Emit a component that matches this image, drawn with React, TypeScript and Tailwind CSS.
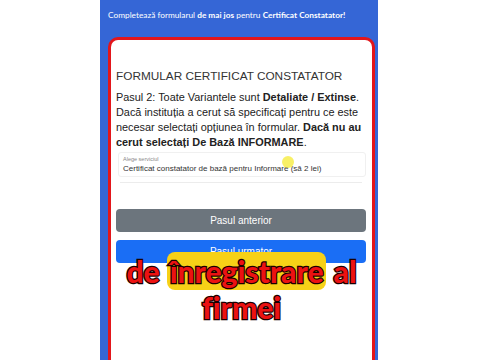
import React from 'react';

const App: React.FC = () => {
  return (
    <div className="w-[480px] h-[360px] overflow-hidden bg-white pl-[100px]">
      {/* phone screen */}
      <div className="w-[278px] h-full bg-[#3566d6] flex flex-col">
        <div className="h-[37px] pl-[8px] pt-[10px] text-white text-[8.3px] leading-[10px] font-['Lato',sans-serif] whitespace-nowrap">
          Completează formularul&nbsp;<b>de mai jos</b>&nbsp;pentru&nbsp;<b>Certificat Constatator!</b>
        </div>

        <div className="relative flex-1 ml-[8px] mr-[3px] border-[3px] border-b-0 border-[#e3161b] rounded-t-[10px] bg-white pl-[5px] pr-[6px] pt-[28px] font-['Liberation_Sans',Arial,sans-serif] text-[#333]">
          <h1 className="text-[11.8px] leading-[16px] text-[#333]">FORMULAR CERTIFICAT CONSTATATOR</h1>
          <p className="mt-[6px] text-[10.9px] leading-[15px] text-[#222]">
            Pasul 2: Toate Variantele sunt <b>Detaliate / Extinse</b>. Dacă instituția a cerut să specificați pentru ce este necesar selectați opțiunea în formular. <b>Dacă nu au cerut selectați De Bază INFORMARE</b>.
          </p>

          {/* select */}
          <div className="relative mt-[2px] ml-[2px] h-[25px] border border-[#f0f0f0] rounded-[3px] px-[4px] flex flex-col justify-center">
            <div className="text-[5.5px] leading-[7px] text-[#888]">Alege serviciul</div>
            <div className="text-[8px] leading-[11px] text-[#333] whitespace-nowrap">
              Certificat constatator de bază pentru Informare (să 2 lei)
            </div>
            <div className="absolute left-[163px] top-[3px] w-[12px] h-[12px] rounded-full bg-[#f3e600]/60" />
          </div>
          <div className="mt-[5px] mx-[4px] h-px bg-[#ececec]" />

          <div className="mt-[26px] h-[23px] rounded-[4px] bg-[#6c757d] flex items-center justify-center text-white text-[10px]">
            Pasul anterior
          </div>
          <div className="mt-[8px] h-[23px] rounded-[4px] bg-[#1a6ef5] flex items-center justify-center text-white text-[10px]">
            Pasul urmator
          </div>

          {/* caption overlay */}
          <div className="absolute left-0 right-0 top-[213px] text-center font-['Lato',sans-serif] font-black text-[30px] leading-[36px] text-[#ec1212] [font-variant-ligatures:none] [-webkit-text-stroke:2.5px_#1a0000] [paint-order:stroke_fill]">
            <div>
              de{' '}
              <span className="bg-[#f7d117] rounded-[8px] px-[3px] py-[1px]">înregistrare</span>{' '}
              al
            </div>
            <div>firmei</div>
          </div>
        </div>
      </div>
    </div>
  );
};

export default App;
